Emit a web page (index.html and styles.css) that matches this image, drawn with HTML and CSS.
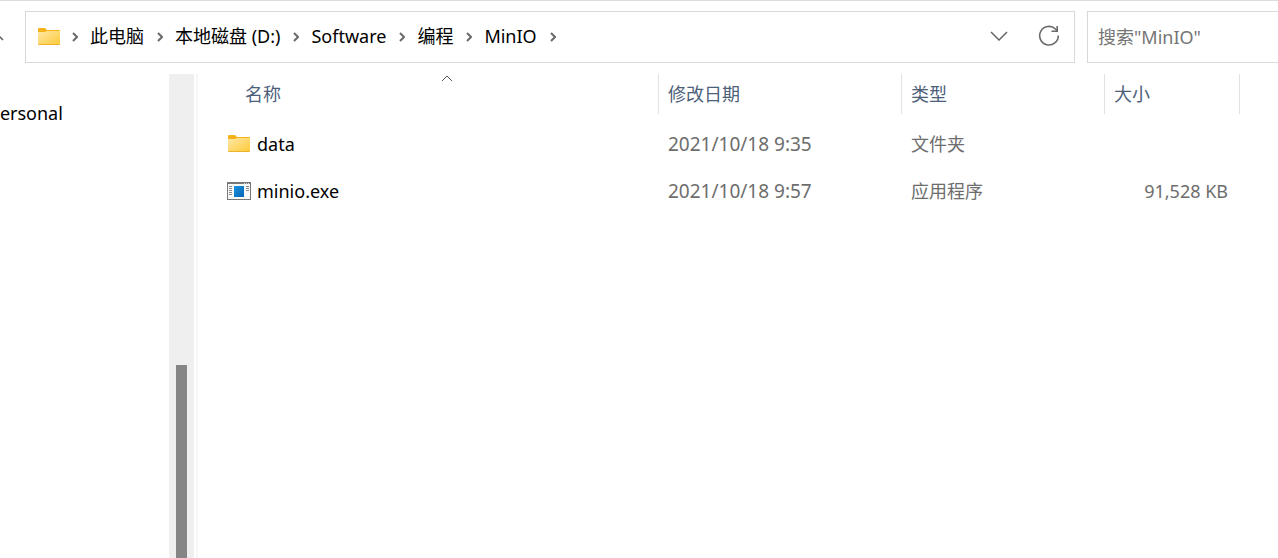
FILE: index.html
```html
<!DOCTYPE html>
<html lang="zh-CN">
<head>
<meta charset="utf-8">
<title>MinIO</title>
<link rel="stylesheet" href="styles.css">
</head>
<body>
<svg class="defs" width="0" height="0" aria-hidden="true">
  <defs>
    <linearGradient id="folder-fill" x1="0" y1="0" x2="1" y2="1">
      <stop offset="0" stop-color="#ffe8a6"/>
      <stop offset="1" stop-color="#ffcb3d"/>
    </linearGradient>
    <linearGradient id="app-fill" x1="0" y1="0" x2="1" y2="1">
      <stop offset="0" stop-color="#1a94e0"/>
      <stop offset="1" stop-color="#0763b5"/>
    </linearGradient>
    <symbol id="folder" viewBox="0 0 22 17">
      <path d="M0 1Q0 0 1 0H7L9 2H21Q22 2 22 3V8H0Z" fill="#f5b21a"/>
      <path d="M0 4H7L9 3H22V16H0Z" fill="url(#folder-fill)"/>
      <path d="M0 16H22Q22 17 21 17H1Q0 17 0 16Z" fill="#eeb32c"/>
    </symbol>
    <symbol id="next" viewBox="0 0 6 10">
      <path d="M1 1L5 5L1 9" fill="none" stroke="#6a6a6a" stroke-width="2"/>
    </symbol>
  </defs>
</svg>
<div class="window">
  <header class="toolbar">
    <button class="up" type="button" aria-label="向上">
      <svg width="14" height="8" viewBox="0 0 14 8"><path d="M1 7L7 1L13 7" fill="none" stroke="#5c5c5c" stroke-width="1.5"/></svg>
    </button>
    <nav class="address" aria-label="地址">
      <svg class="folder" width="22" height="17"><use href="#folder"/></svg>
      <svg class="next" width="6" height="10"><use href="#next"/></svg>
      <a class="crumb" href="#">此电脑</a>
      <svg class="next" width="6" height="10"><use href="#next"/></svg>
      <a class="crumb" href="#">本地磁盘 (D:)</a>
      <svg class="next" width="6" height="10"><use href="#next"/></svg>
      <a class="crumb" href="#">Software</a>
      <svg class="next" width="6" height="10"><use href="#next"/></svg>
      <a class="crumb" href="#">编程</a>
      <svg class="next" width="6" height="10"><use href="#next"/></svg>
      <a class="crumb" href="#">MinIO</a>
      <svg class="next" width="6" height="10"><use href="#next"/></svg>
      <div class="actions">
        <button type="button" aria-label="以前的位置">
          <svg width="18" height="10" viewBox="0 0 18 10"><path d="M1 1L9 9L17 1" fill="none" stroke="#666" stroke-width="1.5"/></svg>
        </button>
        <button type="button" aria-label="刷新">
          <svg width="22" height="22" viewBox="0 1 22 22" fill="none" stroke="#6a6a6a" stroke-width="1.6"><path d="M20.300 11.500A9.300 9.300 0 1 1 17.500 5L19.200 7"/><path d="M19.200 2V7.200H13.500"/></svg>
        </button>
      </div>
    </nav>
    <input class="search" type="search" aria-label="搜索" placeholder='搜索"MinIO"'>
  </header>
  <main class="content">
    <aside class="sidebar"><a href="#">Personal</a></aside>
    <div class="scrollbar"><div class="thumb"></div></div>
    <section class="files">
      <table>
        <colgroup><col><col class="col-date"><col class="col-type"><col class="col-size"><col class="col-rest"></colgroup>
        <thead>
          <tr>
            <th class="name">名称<svg class="sort" width="12" height="7" viewBox="0 0 12 7"><path d="M1 6L6 1L11 6" fill="none" stroke="#555"/></svg></th>
            <th>修改日期</th><th>类型</th><th>大小</th><td></td>
          </tr>
        </thead>
        <tbody>
          <tr>
            <td><a class="file" href="#"><svg width="24" height="18" viewBox="-1 0 24 18"><use href="#folder" width="22" height="17"/></svg>data</a></td>
            <td class="date">2021/10/18 9:35</td><td>文件夹</td><td></td><td></td>
          </tr>
          <tr>
            <td><a class="file" href="#"><svg width="24" height="18" viewBox="0 0 24 18">
              <rect x=".5" y=".5" width="23" height="17" fill="#f8f8f8" stroke="#777"/>
              <path d="M0 0H24V2H0Z" fill="#777"/>
              <path d="M17 1.500H18M19 1.500H20M21 1.500H22" stroke="#ddd"/>
              <rect x="7" y="4" width="10" height="11" fill="url(#app-fill)"/>
              <path d="M2 4.500H5M2 6.500H5M2 8.500H5M2 10.500H5M2 12.500H5M19 4.500H22M19 6.500H22M19 8.500H22" stroke="#888"/>
            </svg>minio.exe</a></td>
            <td class="date">2021/10/18 9:57</td><td>应用程序</td><td class="size">91,528 KB</td><td></td>
          </tr>
        </tbody>
      </table>
    </section>
  </main>
</div>
</body>
</html>
```
FILE: styles.css
```css
* { box-sizing: border-box; }

body {
  margin: 0;
  background: #fff;
  color: #000;
  font: 18px/24px "Noto Sans", "Noto Sans CJK SC", sans-serif;
}

a { color: inherit; text-decoration: none; }

button {
  display: flex;
  padding: 0;
  border: 0;
  background: none;
}

svg { display: block; flex: none; }

.defs { position: absolute; }

.window {
  display: flex;
  flex-direction: column;
  min-height: 100vh;
  overflow: hidden;
  border-top: 1px solid #d9dde1;
}

.toolbar {
  display: flex;
  height: 62px;
  padding-top: 10px;
}

.up {
  align-items: center;
  width: 25px;
  margin-left: -10px;
  margin-right: 10px;
}

.address {
  display: flex;
  flex: 1;
  align-items: center;
  padding: 0 14px 2px 12px;
  border: 1px solid #d9d9d9;
}

.folder { margin-right: -1px; }

.next { margin: 2px 12px 0 13px; }

.crumb { white-space: nowrap; }

.actions {
  display: flex;
  align-items: center;
  gap: 30px;
  margin-left: auto;
}

.search {
  width: 191px;
  margin-left: 12px;
  padding: 0 10px;
  border: 1px solid #d9d9d9;
  border-right: 0;
  border-radius: 0;
  background: #fff;
  color: #000;
  font: inherit;
  appearance: none;
}

.search::placeholder { color: #757575; }

.content {
  display: flex;
  flex: 1;
  padding-top: 11px;
}

.sidebar {
  width: 169px;
  padding-top: 27px;
  overflow: hidden;
}

.sidebar a {
  display: block;
  margin-left: -11px;
}

.scrollbar {
  display: flex;
  justify-content: center;
  width: 25px;
  padding-top: 291px;
  background: #efefef;
}

.thumb {
  width: 11px;
  background: #858585;
}

.files {
  flex: 1;
  margin-left: 2px;
  border-left: 2px solid #f6f6f6;
}

table {
  width: 100%;
  table-layout: fixed;
  border-collapse: separate;
  border-spacing: 0;
  color: #6d6d6d;
}

.col-date { width: 243px; }
.col-type { width: 203px; }
.col-size { width: 135px; }
.col-rest { width: 38px; }

th {
  height: 40px;
  padding: 0 9px;
  border-right: 1px solid #e2e2e2;
  color: #4c607a;
  font-weight: 400;
  text-align: left;
}

.name {
  position: relative;
  padding-left: 47px;
}

.sort {
  position: absolute;
  top: 1px;
  left: 243px;
}

td { padding: 0 9px; }

tbody td { height: 47px; }

tbody::before {
  content: "";
  display: block;
  height: 6px;
}

.file {
  display: flex;
  align-items: center;
  gap: 6px;
  margin-left: 20px;
  color: #000;
}

.date { font-size: 19px; }

tbody .size {
  padding-right: 12px;
  text-align: right;
}
```
